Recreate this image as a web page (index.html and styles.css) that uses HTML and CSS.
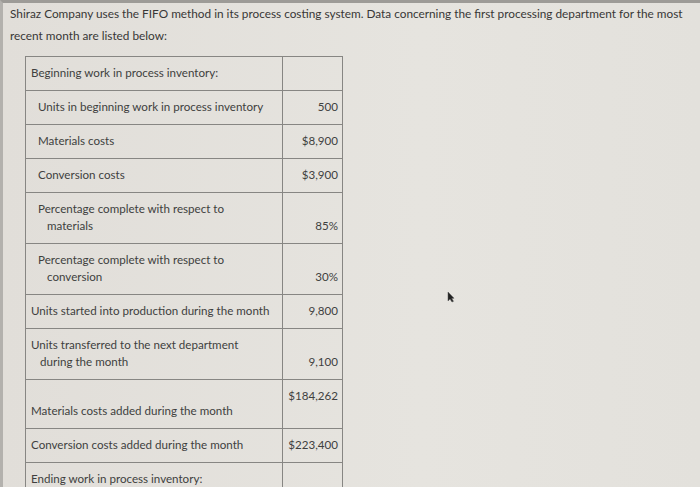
FILE: index.html
```html
<!DOCTYPE html>
<html>
<head>
<meta charset="utf-8">
<link rel="stylesheet" href="styles.css">
</head>
<body>
<div class="page">
  <p class="intro">Shiraz Company uses the FIFO method in its process costing system. Data concerning the first processing department for the most recent month are listed below:</p>
  <table class="data">
    <colgroup><col class="c1"><col class="c2"></colgroup>
    <tr class="r1"><td class="lbl">Beginning work in process inventory:</td><td class="val"></td></tr>
    <tr class="r1"><td class="lbl ind">Units in beginning work in process inventory</td><td class="val">500</td></tr>
    <tr class="r1"><td class="lbl ind">Materials costs</td><td class="val">$8,900</td></tr>
    <tr class="r1"><td class="lbl ind">Conversion costs</td><td class="val">$3,900</td></tr>
    <tr class="r2"><td class="lbl ind hang">Percentage complete with respect to materials</td><td class="val">85%</td></tr>
    <tr class="r2"><td class="lbl ind hang">Percentage complete with respect to conversion</td><td class="val">30%</td></tr>
    <tr class="r1"><td class="lbl">Units started into production during the month</td><td class="val">9,800</td></tr>
    <tr class="r2"><td class="lbl hang0">Units transferred to the next department during the month</td><td class="val">9,100</td></tr>
    <tr class="r2"><td class="lbl low">Materials costs added during the month</td><td class="val top">$184,262</td></tr>
    <tr class="r1"><td class="lbl">Conversion costs added during the month</td><td class="val">$223,400</td></tr>
    <tr class="r1"><td class="lbl">Ending work in process inventory:</td><td class="val"></td></tr>
  </table>
  <svg class="cursor" width="8" height="12" viewBox="0 0 8 12"><path d="M1 1 L1 10 L3 8 L5 11 L6.5 10.3 L4.7 7.5 L7 7.2 Z" fill="#222" stroke="#555" stroke-width="0.5"/></svg>
</div>
</body>
</html>
```
FILE: styles.css
```css
html, body {
  margin: 0;
  padding: 0;
  height: 100%;
  overflow: hidden;
}
body {
  background: #e4e1dc;
  font-family: Lato, "Open Sans", sans-serif;
  color: #454443;
}
.page {
  position: relative;
  height: 484px;
  border-top: 3px solid #9d9b97;
  border-left: 3px solid #b3b1ad;
  background: linear-gradient(90deg, #e1ded9 0%, #e6e4df 60%, #e3e1dc 100%);
}
.intro {
  margin: 0;
  padding: 0 8px 0 7px;
  font-size: 11.8px;
  line-height: 22px;
  color: #383736;
}
.data {
  margin: 9px 0 0 22px;
  border-collapse: collapse;
  table-layout: fixed;
  width: 317px;
  font-size: 11.6px;
  color: #403f3e;
}
.c1 { width: 257px; }
.c2 { width: 60px; }
.data td {
  border: 1px solid #878683;
  line-height: 17px;
  padding: 7px 4px 9px 5px;
}
.val {
  text-align: right;
  vertical-align: bottom;
}
.val.top { vertical-align: top; }
.r1 td { height: 17px; }
.r2 td { height: 32px; }
.ind { padding-left: 12px !important; }
.hang { padding-left: 21px !important; padding-right: 50px !important; text-indent: -9px; }
.hang0 { padding-left: 14px !important; padding-right: 30px !important; text-indent: -9px; }
.low { vertical-align: bottom; }
.cursor {
  position: absolute;
  left: 444px;
  top: 288px;
}
```
